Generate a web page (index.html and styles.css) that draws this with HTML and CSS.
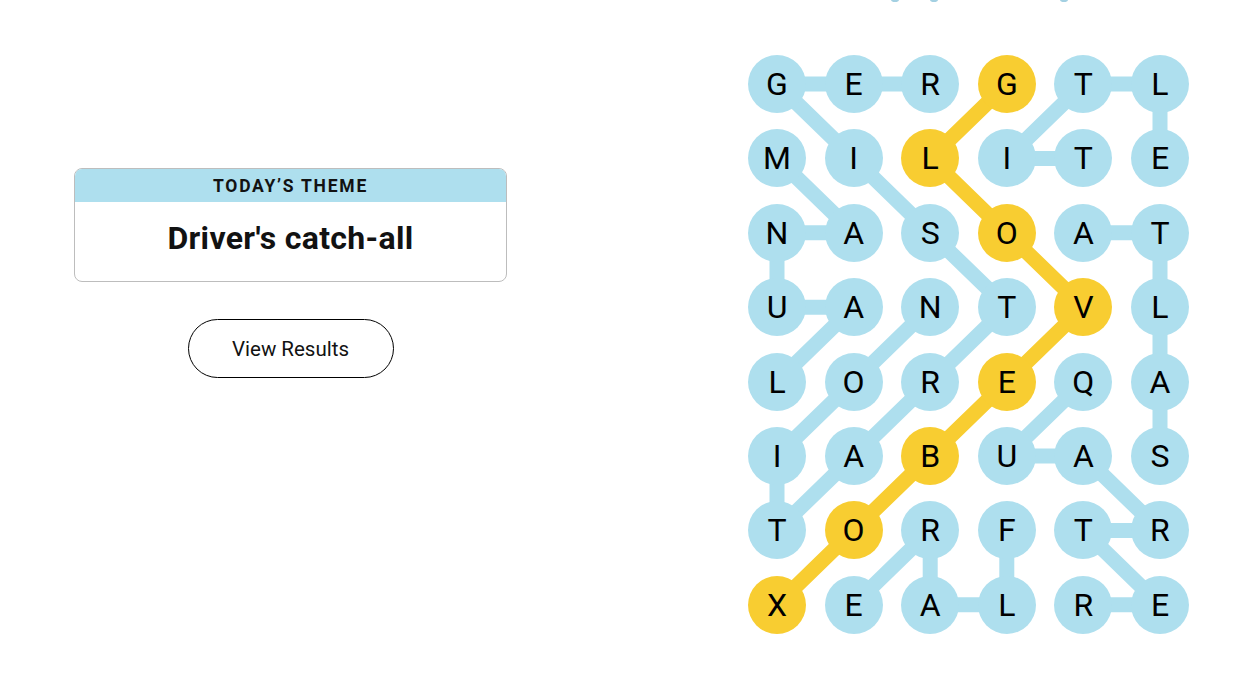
FILE: index.html
```html
<!DOCTYPE html>
<html lang="en">
<head>
<meta charset="utf-8">
<title>Strands</title>
<link rel="stylesheet" href="styles.css">
</head>
<body>
<div class="topmarks" aria-hidden="true">
  <span class="mark m1"></span><span class="mark m2"></span><span class="mark m3"></span>
</div>
<main class="page">
  <section class="left">
    <div class="theme-card">
      <div class="theme-head">TODAY’S THEME</div>
      <div class="theme-body">Driver's catch-all</div>
    </div>
    <button class="results-btn">View Results</button>
  </section>
  <section class="board">
    <svg class="links" width="441" height="579" viewBox="0 0 441 579" aria-hidden="true">
      <g stroke="#aedfee" stroke-width="15" stroke-linecap="round">
        <!-- row 0 -->
        <line x1="29" y1="29" x2="105.6" y2="29"/>
        <line x1="105.6" y1="29" x2="182.2" y2="29"/>
        <line x1="29" y1="29" x2="105.6" y2="103.4"/>
        <line x1="335.4" y1="29" x2="412" y2="29"/>
        <line x1="335.4" y1="29" x2="258.8" y2="103.4"/>
        <line x1="412" y1="29" x2="412" y2="103.4"/>
        <!-- row 1 -->
        <line x1="29" y1="103.4" x2="105.6" y2="177.8"/>
        <line x1="105.6" y1="103.4" x2="182.2" y2="177.8"/>
        <line x1="258.8" y1="103.4" x2="335.4" y2="103.4"/>
        <!-- row 2 -->
        <line x1="29" y1="177.8" x2="105.6" y2="177.8"/>
        <line x1="29" y1="177.8" x2="29" y2="252.2"/>
        <line x1="182.2" y1="177.8" x2="258.8" y2="252.2"/>
        <line x1="335.4" y1="177.8" x2="412" y2="177.8"/>
        <line x1="412" y1="177.8" x2="412" y2="252.2"/>
        <!-- row 3 -->
        <line x1="29" y1="252.2" x2="105.6" y2="252.2"/>
        <line x1="105.6" y1="252.2" x2="29" y2="326.6"/>
        <line x1="182.2" y1="252.2" x2="105.6" y2="326.6"/>
        <line x1="258.8" y1="252.2" x2="182.2" y2="326.6"/>
        <line x1="412" y1="252.2" x2="412" y2="326.6"/>
        <!-- row 4 -->
        <line x1="105.6" y1="326.6" x2="29" y2="401"/>
        <line x1="182.2" y1="326.6" x2="105.6" y2="401"/>
        <line x1="335.4" y1="326.6" x2="258.8" y2="401"/>
        <line x1="412" y1="326.6" x2="412" y2="401"/>
        <!-- row 5 -->
        <line x1="29" y1="401" x2="29" y2="475.4"/>
        <line x1="105.6" y1="401" x2="29" y2="475.4"/>
        <line x1="258.8" y1="401" x2="335.4" y2="401"/>
        <line x1="335.4" y1="401" x2="412" y2="475.4"/>
        <!-- row 6 -->
        <line x1="182.2" y1="475.4" x2="105.6" y2="549.8"/>
        <line x1="182.2" y1="475.4" x2="182.2" y2="549.8"/>
        <line x1="258.8" y1="475.4" x2="258.8" y2="549.8"/>
        <line x1="335.4" y1="475.4" x2="412" y2="475.4"/>
        <line x1="335.4" y1="475.4" x2="412" y2="549.8"/>
        <!-- row 7 -->
        <line x1="182.2" y1="549.8" x2="258.8" y2="549.8"/>
        <line x1="335.4" y1="549.8" x2="412" y2="549.8"/>
      </g>
      <polyline fill="none" stroke="#f8cd31" stroke-width="15" stroke-linejoin="round" stroke-linecap="round"
        points="258.8,29 182.2,103.4 258.8,177.8 335.4,252.2 258.8,326.6 182.2,401 105.6,475.4 29,549.8"/>
    </svg>
    <div class="grid">
      <span class="cell">G</span><span class="cell">E</span><span class="cell">R</span><span class="cell found">G</span><span class="cell">T</span><span class="cell">L</span>
      <span class="cell">M</span><span class="cell">I</span><span class="cell found">L</span><span class="cell">I</span><span class="cell">T</span><span class="cell">E</span>
      <span class="cell">N</span><span class="cell">A</span><span class="cell">S</span><span class="cell found">O</span><span class="cell">A</span><span class="cell">T</span>
      <span class="cell">U</span><span class="cell">A</span><span class="cell">N</span><span class="cell">T</span><span class="cell found">V</span><span class="cell">L</span>
      <span class="cell">L</span><span class="cell">O</span><span class="cell">R</span><span class="cell found">E</span><span class="cell">Q</span><span class="cell">A</span>
      <span class="cell">I</span><span class="cell">A</span><span class="cell found">B</span><span class="cell">U</span><span class="cell">A</span><span class="cell">S</span>
      <span class="cell">T</span><span class="cell found">O</span><span class="cell">R</span><span class="cell">F</span><span class="cell">T</span><span class="cell">R</span>
      <span class="cell found">X</span><span class="cell">E</span><span class="cell">A</span><span class="cell">L</span><span class="cell">R</span><span class="cell">E</span>
    </div>
  </section>
</main>
</body>
</html>
```

FILE: styles.css
```css
* { box-sizing: border-box; }

html, body {
  margin: 0;
  padding: 0;
  background: #ffffff;
  color: #000000;
  font-family: Roboto, "Liberation Sans", sans-serif;
}

body {
  width: 1250px;
  height: 696px;
  overflow: hidden;
  position: relative;
}

.topmarks {
  position: absolute;
  top: 0;
  left: 0;
  width: 1250px;
  height: 4px;
}

.mark {
  position: absolute;
  top: -3px;
  width: 8px;
  height: 5px;
  border-radius: 50%;
  background: #a3d0e2;
}
.m1 { left: 891px; }
.m2 { left: 930px; }
.m3 { left: 1060px; }

.page {
  display: flex;
  align-items: flex-start;
}

.left {
  width: 581px;
  padding-top: 168px;
  display: flex;
  flex-direction: column;
  align-items: center;
}

.theme-card {
  width: 433px;
  border: 1px solid #bdbdbd;
  border-radius: 8px;
  overflow: hidden;
  text-align: center;
}

.theme-head {
  background: #aedfee;
  height: 33px;
  line-height: 34px;
  font-size: 17.5px;
  font-weight: 700;
  letter-spacing: 0.1em;
  color: #121212;
}

.theme-body {
  height: 79px;
  line-height: 73px;
  font-size: 32px;
  font-weight: 700;
  color: #121212;
  letter-spacing: 0.01em;
}

.results-btn {
  margin-top: 37px;
  width: 206px;
  height: 59px;
  border: 1.5px solid #000;
  border-radius: 30px;
  background: #fff;
  font-family: Roboto, "Liberation Sans", sans-serif;
  font-size: 20.5px;
  color: #121212;
  padding: 0;
}

.board {
  position: relative;
  margin-left: 167px;
  margin-top: 55px;
  width: 441px;
  height: 579px;
}

.links {
  position: absolute;
  left: 0;
  top: 0;
}

.grid {
  position: relative;
  display: grid;
  grid-template-columns: repeat(6, 58px);
  grid-auto-rows: 58px;
  column-gap: 18.6px;
  row-gap: 16.4px;
}

.cell {
  width: 58px;
  height: 58px;
  border-radius: 50%;
  background: #aedfee;
  display: flex;
  align-items: center;
  justify-content: center;
  font-size: 32px;
  font-weight: 400;
  color: #000;
  line-height: 1;
}

.cell.found {
  background: #f8cd31;
}
```
